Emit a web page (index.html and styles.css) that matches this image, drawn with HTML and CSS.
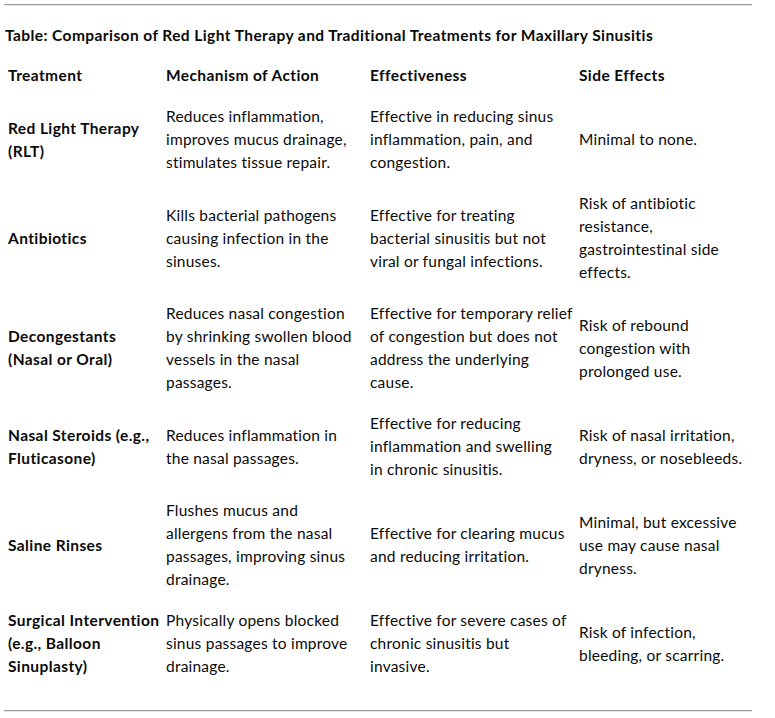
FILE: index.html
```html
<!DOCTYPE html>
<html>
<head>
<meta charset="utf-8">
<link rel="stylesheet" href="styles.css">
</head>
<body>
<div class="doc">
  <div class="rule"></div>
  <p class="caption">Table: Comparison of Red Light Therapy and Traditional Treatments for Maxillary Sinusitis</p>
  <table class="cmp">
    <colgroup>
      <col class="c1"><col class="c2"><col class="c3"><col class="c4">
    </colgroup>
    <thead>
      <tr><th>Treatment</th><th>Mechanism of Action</th><th>Effectiveness</th><th>Side Effects</th></tr>
    </thead>
    <tbody>
      <tr>
        <th>Red Light Therapy<br>(RLT)</th>
        <td>Reduces inflammation,<br>improves mucus drainage,<br>stimulates tissue repair.</td>
        <td>Effective in reducing sinus<br>inflammation, pain, and<br>congestion.</td>
        <td>Minimal to none.</td>
      </tr>
      <tr>
        <th>Antibiotics</th>
        <td>Kills bacterial pathogens<br>causing infection in the<br>sinuses.</td>
        <td>Effective for treating<br>bacterial sinusitis but not<br>viral or fungal infections.</td>
        <td>Risk of antibiotic<br>resistance,<br>gastrointestinal side<br>effects.</td>
      </tr>
      <tr>
        <th>Decongestants<br>(Nasal or Oral)</th>
        <td>Reduces nasal congestion<br>by shrinking swollen blood<br>vessels in the nasal<br>passages.</td>
        <td>Effective for temporary relief<br>of congestion but does not<br>address the underlying<br>cause.</td>
        <td>Risk of rebound<br>congestion with<br>prolonged use.</td>
      </tr>
      <tr>
        <th>Nasal Steroids (e.g.,<br>Fluticasone)</th>
        <td>Reduces inflammation in<br>the nasal passages.</td>
        <td>Effective for reducing<br>inflammation and swelling<br>in chronic sinusitis.</td>
        <td>Risk of nasal irritation,<br>dryness, or nosebleeds.</td>
      </tr>
      <tr>
        <th>Saline Rinses</th>
        <td>Flushes mucus and<br>allergens from the nasal<br>passages, improving sinus<br>drainage.</td>
        <td>Effective for clearing mucus<br>and reducing irritation.</td>
        <td>Minimal, but excessive<br>use may cause nasal<br>dryness.</td>
      </tr>
      <tr>
        <th>Surgical Intervention<br>(e.g., Balloon<br>Sinuplasty)</th>
        <td>Physically opens blocked<br>sinus passages to improve<br>drainage.</td>
        <td>Effective for severe cases of<br>chronic sinusitis but<br>invasive.</td>
        <td>Risk of infection,<br>bleeding, or scarring.</td>
      </tr>
    </tbody>
  </table>
  <div class="rule rule-bottom"></div>
</div>
</body>
</html>
```

FILE: styles.css
```css
html, body {
  margin: 0;
  padding: 0;
  background: #ffffff;
}

body {
  font-family: Lato, "Liberation Sans", sans-serif;
  font-size: 15.5px;
  letter-spacing: 0.22px;
  color: #0a0a0a;
}

.doc {
  margin: 4px 0 0 4px;
  width: 748px;
}

.rule {
  height: 0;
  border-top: 1px solid #9a9a9a;
  border-bottom: 1px solid #e6e6e6;
}

.caption {
  margin: 18px 0 0 1px;
  line-height: 23px;
  font-weight: 700;
  letter-spacing: 0.42px;
}

.cmp {
  width: 748px;
  table-layout: fixed;
  border-collapse: collapse;
  margin-top: 8px;
}

.c1 { width: 158px; }
.c2 { width: 204px; }
.c3 { width: 209px; }
.c4 { width: 177px; }

.cmp th,
.cmp td {
  padding: 9px 0 9px 4px;
  line-height: 23px;
  text-align: left;
  vertical-align: middle;
  white-space: nowrap;
}

.cmp th {
  font-weight: 700;
  letter-spacing: 0.4px;
}

.cmp td {
  font-weight: 400;
}

.rule-bottom {
  margin-top: 23px;
}
```
